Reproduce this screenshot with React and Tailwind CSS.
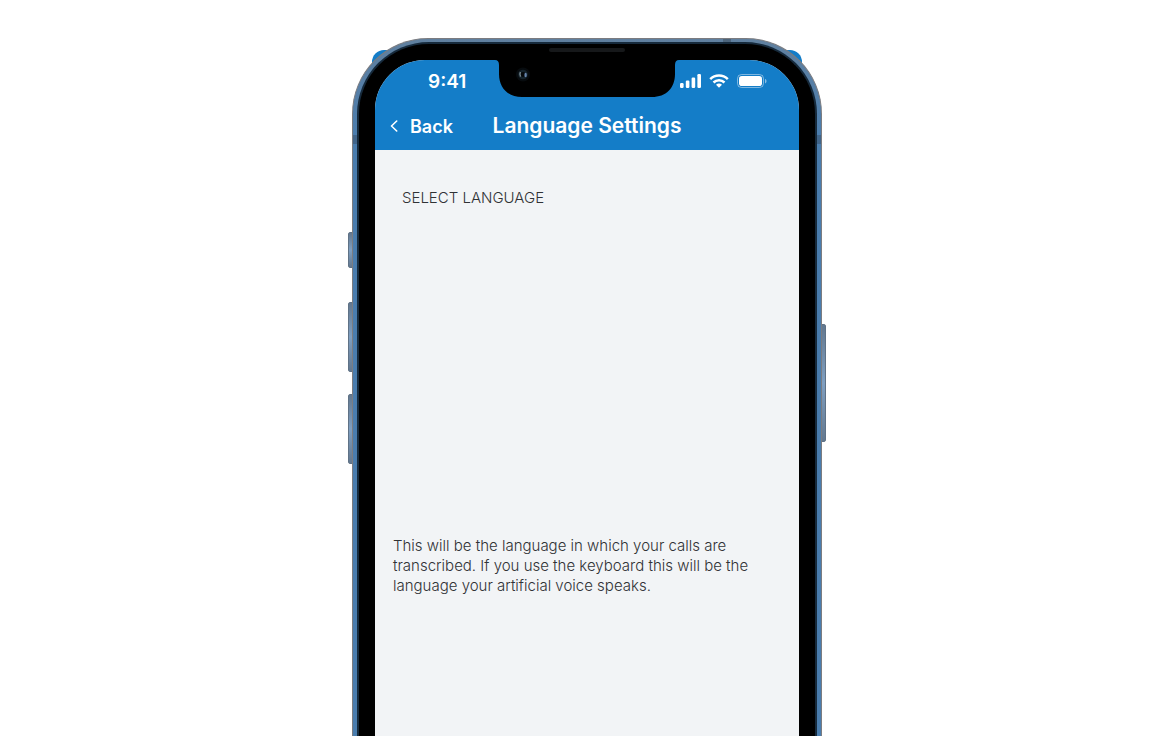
const SideKey = ({ className }) => (
  <span
    className={`absolute w-[7px] rounded-[2px] border border-[#5f7286] bg-linear-to-b from-[#63788f] via-[#7f9fc1] to-[#63788f] ${className}`}
  />
);

const SignalIcon = () => (
  <svg className="h-[14px] w-[21px]" viewBox="0 0 21 14" fill="currentColor" aria-hidden="true">
    <rect x="0" y="9" width="3.6" height="5" rx="1.2" />
    <rect x="5.8" y="6.5" width="3.6" height="7.5" rx="1.2" />
    <rect x="11.6" y="3.5" width="3.6" height="10.5" rx="1.2" />
    <rect x="17.4" y="0" width="3.6" height="14" rx="1.2" />
  </svg>
);

const WifiIcon = () => (
  <svg className="h-[14px] w-[20px]" viewBox="0 0 20 14" fill="none" stroke="currentColor" strokeWidth="2.5" aria-hidden="true">
    <path d="M1.2 5.1a12.6 12.6 0 0 1 17.6 0" />
    <path d="M4.5 8.5a7.9 7.9 0 0 1 11 0" />
    <path d="M7 10.8a4.4 4.4 0 0 1 6 0L10 13.8z" fill="currentColor" stroke="none" />
  </svg>
);

const BatteryIcon = () => (
  <svg className="h-[14px] w-[30px]" viewBox="0 0 30 14" aria-hidden="true">
    <rect x="0.5" y="0.5" width="26" height="13" rx="4" fill="none" stroke="#fff" strokeOpacity="0.45" />
    <rect x="2" y="2" width="23" height="10" rx="2.8" fill="#fff" />
    <path d="M28 5v4.4c1-.4 1.5-1.2 1.5-2.2S29 5.4 28 5z" fill="#fff" fillOpacity="0.5" />
  </svg>
);

// Notch with the small concave shoulders where it meets the bezel
const Notch = () => (
  <svg className="absolute -top-px left-1/2 h-[38px] w-[184px] -translate-x-1/2" viewBox="0 0 184 38" aria-hidden="true">
    <path d="M0 0V1Q4 1 4 6V15C4 29 13 38 27 38H157C171 38 180 29 180 15V6Q180 1 184 1V0z" fill="#000" />
    <circle cx="28" cy="15.5" r="7" fill="#070b0e" />
    <circle cx="28" cy="15.5" r="4.8" fill="#14222b" />
    <circle cx="28" cy="15.5" r="2.4" fill="#05080b" />
    <path d="M25.4 13q-1.2 2.200 0.200 4.600" stroke="#75858c" strokeWidth="1.5" fill="none" />
    <ellipse cx="30.6" cy="16" rx="1.2" ry="2.2" fill="#6685ad" />
  </svg>
);

const StatusBar = () => (
  <div className="flex h-[42px] items-center justify-between pr-[32px] pl-[53px]">
    <span className="text-[19px] leading-none font-semibold">9:41</span>
    <div className="flex items-center gap-2">
      <SignalIcon />
      <WifiIcon />
      <BatteryIcon />
    </div>
  </div>
);

const NavBar = () => (
  <header className="flex h-12 items-center px-[15px]">
    <button type="button" className="flex flex-1 items-center gap-3 text-[18px] font-semibold">
      <svg className="h-3 w-2" viewBox="0 0 8 12" fill="none" stroke="currentColor" strokeWidth="1.6" strokeLinecap="round" strokeLinejoin="round" aria-hidden="true">
        <path d="M6.7 1L1.5 6l5.2 5" />
      </svg>
      Back
    </button>
    <h1 className="text-[21px] font-semibold">Language Settings</h1>
    <span className="flex-1" />
  </header>
);

export default function App() {
  return (
    <main className="flex min-h-screen flex-col items-center overflow-hidden bg-white pt-[38px] font-['Inter',sans-serif]">
      <div className="relative isolate flex w-[470px] max-w-full flex-1 flex-col">
        <SideKey className="top-[194px] -left-1 -z-10 h-[36px]" />
        <SideKey className="top-[264px] -left-1 -z-10 h-[70px]" />
        <SideKey className="top-[356px] -left-1 -z-10 h-[70px]" />
        <SideKey className="top-[286px] -right-1 -z-10 h-[118px]" />
        <span className="absolute inset-x-5 top-3 -z-10 h-20 rounded-[12px] bg-[#147dc8]" />

        {/* Metal rim */}
        <div className="flex flex-1 flex-col rounded-t-[76px] border-x border-t border-[#7b7c80] bg-linear-to-b from-[#60809f] to-[#4a7dae] to-[100px] px-1 pt-[3px]">
          <div className="relative flex flex-1 flex-col rounded-t-[72px] border-x-2 border-t-2 border-[#162a3c] bg-black px-4 pt-4">
            <span className="absolute top-[4px] left-1/2 h-1 w-[76px] -translate-x-1/2 rounded-full bg-[#16181a]" />
            {/* Antenna bands */}
            <span className="absolute top-[91px] -left-[6px] h-[9px] w-1 bg-[#41658a]" />
            <span className="absolute top-[91px] -right-[6px] h-[9px] w-1 bg-[#41658a]" />
            <span className="absolute -top-[5px] right-[84px] h-[3px] w-2 bg-[#4d657c]" />

            {/* Screen */}
            <div className="relative flex flex-1 flex-col overflow-hidden rounded-t-[50px] bg-[#f2f4f6]">
              <Notch />
              <div className="bg-[#147dc8] text-white">
                <StatusBar />
                <NavBar />
              </div>
              <section className="px-[18px] pt-[38px] text-[15px] leading-5 font-light text-[#303235]">
                <h2 className="px-[9px]">SELECT LANGUAGE</h2>
                <p className="mt-[328px]">
                  This will be the language in which your calls are transcribed. If you use the keyboard this will be the
                  language your artificial voice speaks.
                </p>
              </section>
            </div>
          </div>
        </div>
      </div>
    </main>
  );
}
